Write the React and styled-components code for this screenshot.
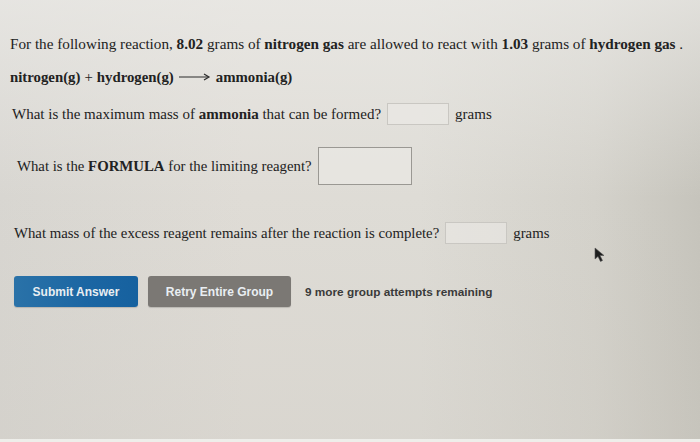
import React from 'react';
import styled, { createGlobalStyle } from 'styled-components';

const GlobalStyle = createGlobalStyle`
    html, body {
        margin: 0;
        padding: 0;
    }
    body {
        font-family: "Liberation Serif", "Times New Roman", serif;
        color: #222;
    }
`;

const Screen = styled.div`
    position: relative;
    width: 700px;
    height: 442px;
    overflow: hidden;
    box-sizing: border-box;
    padding: 35px 0 0 10px;
    background:
        linear-gradient(180deg, rgba(236, 235, 232, 0.7) 0%, rgba(236, 235, 232, 0) 45%, rgba(200, 196, 188, 0.25) 100%),
        linear-gradient(90deg, #d8d6d1 0%, #dfdcd6 35%, #dedcd6 60%, #d4d2cb 85%, #c6c4bc 100%);
    border-bottom: 3px solid #eeeeea;
`;

const Line = styled.div`
    font-size: ${(p) => p.size || 15}px;
    line-height: 18px;
    margin-left: ${(p) => p.indent || 0}px;
    margin-top: ${(p) => p.top || 0}px;
    white-space: nowrap;
`;

const Equation = styled(Line)`
    display: flex;
    align-items: center;
    font-weight: bold;
`;

const Plus = styled.span`
    font-weight: normal;
    margin: 0 4px;
`;

const Question = styled.div`
    display: flex;
    align-items: center;
    font-size: ${(p) => p.size || 15}px;
    margin-left: ${(p) => p.indent || 0}px;
    margin-top: ${(p) => p.top || 0}px;
    white-space: nowrap;
`;

const AnswerBox = styled.div`
    width: ${(p) => p.w}px;
    height: ${(p) => p.h}px;
    margin-left: 6px;
    margin-right: 6px;
    box-sizing: border-box;
    border: 1px solid ${(p) => (p.dark ? '#9a9893' : '#c9c7c2')};
    background: rgba(236, 235, 231, 0.55);
`;

const Actions = styled.div`
    display: flex;
    align-items: center;
    margin-left: 4px;
    margin-top: 32px;
    font-family: "Liberation Sans", Arial, sans-serif;
`;

const Button = styled.div`
    height: 31px;
    width: ${(p) => p.w}px;
    margin-right: ${(p) => p.gap}px;
    border-radius: 3px;
    display: flex;
    align-items: center;
    justify-content: center;
    font-size: 12px;
    font-weight: bold;
    color: #e9eef2;
    background: ${(p) => (p.primary ? 'linear-gradient(90deg, #2a72a8, #1b66a3 60%, #16619f)' : '#7b7874')};
    box-shadow: 0 1px 1px rgba(0, 0, 0, 0.15);
`;

const Remaining = styled.span`
    font-size: 11.8px;
    font-weight: bold;
    color: #3a3a3a;
`;

const Cursor = styled.svg`
    position: absolute;
    left: 594px;
    top: 247px;
`;

function Arrow() {
    return (
        <svg width="32" height="10" viewBox="0 0 32 10" style={{ margin: '0 5px' }}>
            <line x1="0" y1="5" x2="29" y2="5" stroke="#2a2a2a" strokeWidth="1" />
            <path d="M25 2 L30 5 L25 8" fill="none" stroke="#2a2a2a" strokeWidth="1.2" />
        </svg>
    );
}

export default function App() {
    return (
        <Screen>
            <GlobalStyle />
            <Line size={15.2}>
                For the following reaction, <b>8.02</b> grams of <b>nitrogen gas</b> are allowed to react with <b>1.03</b> grams of <b>hydrogen gas</b> .
            </Line>
            <Equation top={15} size={14.8}>
                nitrogen(g)<Plus>+</Plus>hydrogen(g)<Arrow />ammonia(g)
            </Equation>
            <Question indent={2} top={17} size={15}>
                What is the maximum mass of <b>&nbsp;ammonia&nbsp;</b> that can be formed?
                <AnswerBox w={62} h={22} />
                grams
            </Question>
            <Question indent={7} top={22} size={14.8}>
                What is the <b>&nbsp;FORMULA&nbsp;</b> for the limiting reagent?
                <AnswerBox w={94} h={38} dark />
            </Question>
            <Question indent={4} top={37} size={14.8}>
                What mass of the excess reagent remains after the reaction is complete?
                <AnswerBox w={62} h={22} />
                grams
            </Question>
            <Actions>
                <Button primary w={124} gap={10}>Submit Answer</Button>
                <Button w={143} gap={14}>Retry Entire Group</Button>
                <Remaining>9 more group attempts remaining</Remaining>
            </Actions>
            <Cursor width="12" height="16" viewBox="0 0 12 16">
                <path d="M1 1 L1 12 L4 9.5 L6.5 14.5 L8.5 13.5 L6 8.5 L10 8.5 Z" fill="#1e1e1e" stroke="#555" strokeWidth="0.6" />
            </Cursor>
        </Screen>
    );
}
